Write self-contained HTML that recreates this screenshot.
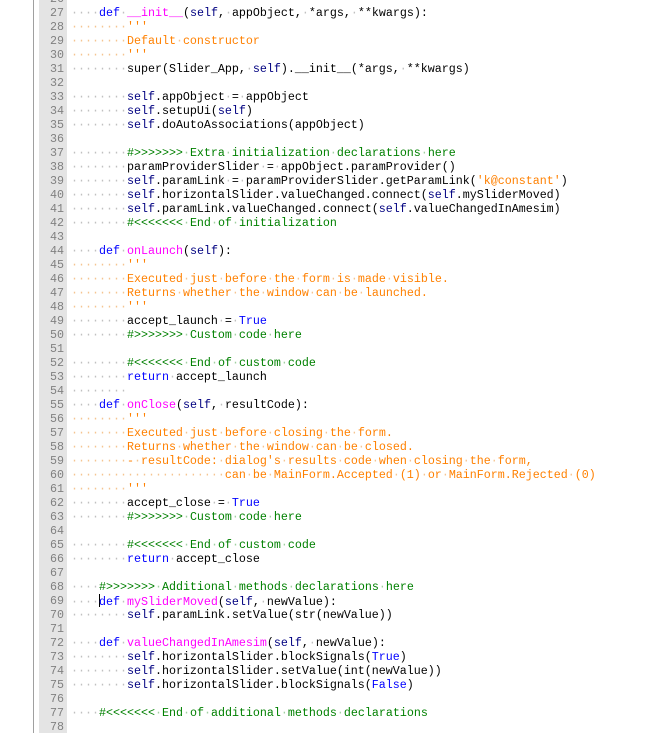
<!DOCTYPE html>
<html><head><meta charset="utf-8"><style>
html,body{margin:0;padding:0;background:#fff;width:664px;height:733px;overflow:hidden}
.vl{position:absolute;left:33px;top:0;width:1px;height:733px;background:#a0a0a0}
.mg{position:absolute;left:39px;top:0;width:28px;height:733px;background:#e4e4e4}
.wrap{position:absolute;left:0;top:-8px;font-family:"Liberation Mono",monospace;font-size:11.67px;line-height:14px}
.r{position:relative;height:14px;white-space:pre}
.n{position:absolute;left:39px;width:25px;text-align:right;color:#808080}
.t{position:absolute;left:71px;color:#000}
.d{color:#c0c0c0}.ds{color:#f5c490}.dc{color:#a0d0a0}
.k{color:#0000ff}.f{color:#ff00ff}.s{color:#ff8000}.c{color:#008000}.sf{color:#000080}
.caret{display:inline-block;width:1px;height:13px;background:#000;vertical-align:-2px;margin-right:-1px}
</style></head><body>
<div class="vl"></div><div class="mg"></div>
<div class="wrap">
<div class="r"><span class="n">26</span></div>
<div class="r"><span class="n">27</span><span class="t"><span class="d">····</span><span class="k">def</span><span class="d">·</span><span class="f">__init__</span>(<span class="sf">self</span>,<span class="d">·</span>appObject,<span class="d">·</span>*args,<span class="d">·</span>**kwargs):</span></div>
<div class="r"><span class="n">28</span><span class="t"><span class="ds">········</span><span class="s">'''</span></span></div>
<div class="r"><span class="n">29</span><span class="t"><span class="ds">········</span><span class="s">Default<span class="ds">·</span>constructor</span></span></div>
<div class="r"><span class="n">30</span><span class="t"><span class="ds">········</span><span class="s">'''</span></span></div>
<div class="r"><span class="n">31</span><span class="t"><span class="d">········</span>super(Slider_App,<span class="d">·</span><span class="sf">self</span>).__init__(*args,<span class="d">·</span>**kwargs)</span></div>
<div class="r"><span class="n">32</span></div>
<div class="r"><span class="n">33</span><span class="t"><span class="d">········</span><span class="sf">self</span>.appObject<span class="d">·</span>=<span class="d">·</span>appObject</span></div>
<div class="r"><span class="n">34</span><span class="t"><span class="d">········</span><span class="sf">self</span>.setupUi(<span class="sf">self</span>)</span></div>
<div class="r"><span class="n">35</span><span class="t"><span class="d">········</span><span class="sf">self</span>.doAutoAssociations(appObject)</span></div>
<div class="r"><span class="n">36</span></div>
<div class="r"><span class="n">37</span><span class="t"><span class="d">········</span><span class="c">#&gt;&gt;&gt;&gt;&gt;&gt;&gt;<span class="dc">·</span>Extra<span class="dc">·</span>initialization<span class="dc">·</span>declarations<span class="dc">·</span>here</span></span></div>
<div class="r"><span class="n">38</span><span class="t"><span class="d">········</span>paramProviderSlider<span class="d">·</span>=<span class="d">·</span>appObject.paramProvider()</span></div>
<div class="r"><span class="n">39</span><span class="t"><span class="d">········</span><span class="sf">self</span>.paramLink<span class="d">·</span>=<span class="d">·</span>paramProviderSlider.getParamLink(<span class="s">'k@constant'</span>)</span></div>
<div class="r"><span class="n">40</span><span class="t"><span class="d">········</span><span class="sf">self</span>.horizontalSlider.valueChanged.connect(<span class="sf">self</span>.mySliderMoved)</span></div>
<div class="r"><span class="n">41</span><span class="t"><span class="d">········</span><span class="sf">self</span>.paramLink.valueChanged.connect(<span class="sf">self</span>.valueChangedInAmesim)</span></div>
<div class="r"><span class="n">42</span><span class="t"><span class="d">········</span><span class="c">#&lt;&lt;&lt;&lt;&lt;&lt;&lt;<span class="dc">·</span>End<span class="dc">·</span>of<span class="dc">·</span>initialization</span></span></div>
<div class="r"><span class="n">43</span></div>
<div class="r"><span class="n">44</span><span class="t"><span class="d">····</span><span class="k">def</span><span class="d">·</span><span class="f">onLaunch</span>(<span class="sf">self</span>):</span></div>
<div class="r"><span class="n">45</span><span class="t"><span class="ds">········</span><span class="s">'''</span></span></div>
<div class="r"><span class="n">46</span><span class="t"><span class="ds">········</span><span class="s">Executed<span class="ds">·</span>just<span class="ds">·</span>before<span class="ds">·</span>the<span class="ds">·</span>form<span class="ds">·</span>is<span class="ds">·</span>made<span class="ds">·</span>visible.</span></span></div>
<div class="r"><span class="n">47</span><span class="t"><span class="ds">········</span><span class="s">Returns<span class="ds">·</span>whether<span class="ds">·</span>the<span class="ds">·</span>window<span class="ds">·</span>can<span class="ds">·</span>be<span class="ds">·</span>launched.</span></span></div>
<div class="r"><span class="n">48</span><span class="t"><span class="ds">········</span><span class="s">'''</span></span></div>
<div class="r"><span class="n">49</span><span class="t"><span class="d">········</span>accept_launch<span class="d">·</span>=<span class="d">·</span><span class="k">True</span></span></div>
<div class="r"><span class="n">50</span><span class="t"><span class="d">········</span><span class="c">#&gt;&gt;&gt;&gt;&gt;&gt;&gt;<span class="dc">·</span>Custom<span class="dc">·</span>code<span class="dc">·</span>here</span></span></div>
<div class="r"><span class="n">51</span></div>
<div class="r"><span class="n">52</span><span class="t"><span class="d">········</span><span class="c">#&lt;&lt;&lt;&lt;&lt;&lt;&lt;<span class="dc">·</span>End<span class="dc">·</span>of<span class="dc">·</span>custom<span class="dc">·</span>code</span></span></div>
<div class="r"><span class="n">53</span><span class="t"><span class="d">········</span><span class="k">return</span><span class="d">·</span>accept_launch</span></div>
<div class="r"><span class="n">54</span><span class="t"><span class="d">········</span></span></div>
<div class="r"><span class="n">55</span><span class="t"><span class="d">····</span><span class="k">def</span><span class="d">·</span><span class="f">onClose</span>(<span class="sf">self</span>,<span class="d">·</span>resultCode):</span></div>
<div class="r"><span class="n">56</span><span class="t"><span class="ds">········</span><span class="s">'''</span></span></div>
<div class="r"><span class="n">57</span><span class="t"><span class="ds">········</span><span class="s">Executed<span class="ds">·</span>just<span class="ds">·</span>before<span class="ds">·</span>closing<span class="ds">·</span>the<span class="ds">·</span>form.</span></span></div>
<div class="r"><span class="n">58</span><span class="t"><span class="ds">········</span><span class="s">Returns<span class="ds">·</span>whether<span class="ds">·</span>the<span class="ds">·</span>window<span class="ds">·</span>can<span class="ds">·</span>be<span class="ds">·</span>closed.</span></span></div>
<div class="r"><span class="n">59</span><span class="t"><span class="ds">········</span><span class="s">-<span class="ds">·</span>resultCode:<span class="ds">·</span>dialog's<span class="ds">·</span>results<span class="ds">·</span>code<span class="ds">·</span>when<span class="ds">·</span>closing<span class="ds">·</span>the<span class="ds">·</span>form,</span></span></div>
<div class="r"><span class="n">60</span><span class="t"><span class="ds">······················</span><span class="s">can<span class="ds">·</span>be<span class="ds">·</span>MainForm.Accepted<span class="ds">·</span>(1)<span class="ds">·</span>or<span class="ds">·</span>MainForm.Rejected<span class="ds">·</span>(0)</span></span></div>
<div class="r"><span class="n">61</span><span class="t"><span class="ds">········</span><span class="s">'''</span></span></div>
<div class="r"><span class="n">62</span><span class="t"><span class="d">········</span>accept_close<span class="d">·</span>=<span class="d">·</span><span class="k">True</span></span></div>
<div class="r"><span class="n">63</span><span class="t"><span class="d">········</span><span class="c">#&gt;&gt;&gt;&gt;&gt;&gt;&gt;<span class="dc">·</span>Custom<span class="dc">·</span>code<span class="dc">·</span>here</span></span></div>
<div class="r"><span class="n">64</span></div>
<div class="r"><span class="n">65</span><span class="t"><span class="d">········</span><span class="c">#&lt;&lt;&lt;&lt;&lt;&lt;&lt;<span class="dc">·</span>End<span class="dc">·</span>of<span class="dc">·</span>custom<span class="dc">·</span>code</span></span></div>
<div class="r"><span class="n">66</span><span class="t"><span class="d">········</span><span class="k">return</span><span class="d">·</span>accept_close</span></div>
<div class="r"><span class="n">67</span></div>
<div class="r"><span class="n">68</span><span class="t"><span class="d">····</span><span class="c">#&gt;&gt;&gt;&gt;&gt;&gt;&gt;<span class="dc">·</span>Additional<span class="dc">·</span>methods<span class="dc">·</span>declarations<span class="dc">·</span>here</span></span></div>
<div class="r"><span class="n">69</span><span class="t"><span class="d">····</span><span class="caret"></span><span class="k">def</span><span class="d">·</span><span class="f">mySliderMoved</span>(<span class="sf">self</span>,<span class="d">·</span>newValue):</span></div>
<div class="r"><span class="n">70</span><span class="t"><span class="d">········</span><span class="sf">self</span>.paramLink.setValue(str(newValue))</span></div>
<div class="r"><span class="n">71</span></div>
<div class="r"><span class="n">72</span><span class="t"><span class="d">····</span><span class="k">def</span><span class="d">·</span><span class="f">valueChangedInAmesim</span>(<span class="sf">self</span>,<span class="d">·</span>newValue):</span></div>
<div class="r"><span class="n">73</span><span class="t"><span class="d">········</span><span class="sf">self</span>.horizontalSlider.blockSignals(<span class="k">True</span>)</span></div>
<div class="r"><span class="n">74</span><span class="t"><span class="d">········</span><span class="sf">self</span>.horizontalSlider.setValue(int(newValue))</span></div>
<div class="r"><span class="n">75</span><span class="t"><span class="d">········</span><span class="sf">self</span>.horizontalSlider.blockSignals(<span class="k">False</span>)</span></div>
<div class="r"><span class="n">76</span></div>
<div class="r"><span class="n">77</span><span class="t"><span class="d">····</span><span class="c">#&lt;&lt;&lt;&lt;&lt;&lt;&lt;<span class="dc">·</span>End<span class="dc">·</span>of<span class="dc">·</span>additional<span class="dc">·</span>methods<span class="dc">·</span>declarations</span></span></div>
<div class="r"><span class="n">78</span></div>
</div>
</body></html>
